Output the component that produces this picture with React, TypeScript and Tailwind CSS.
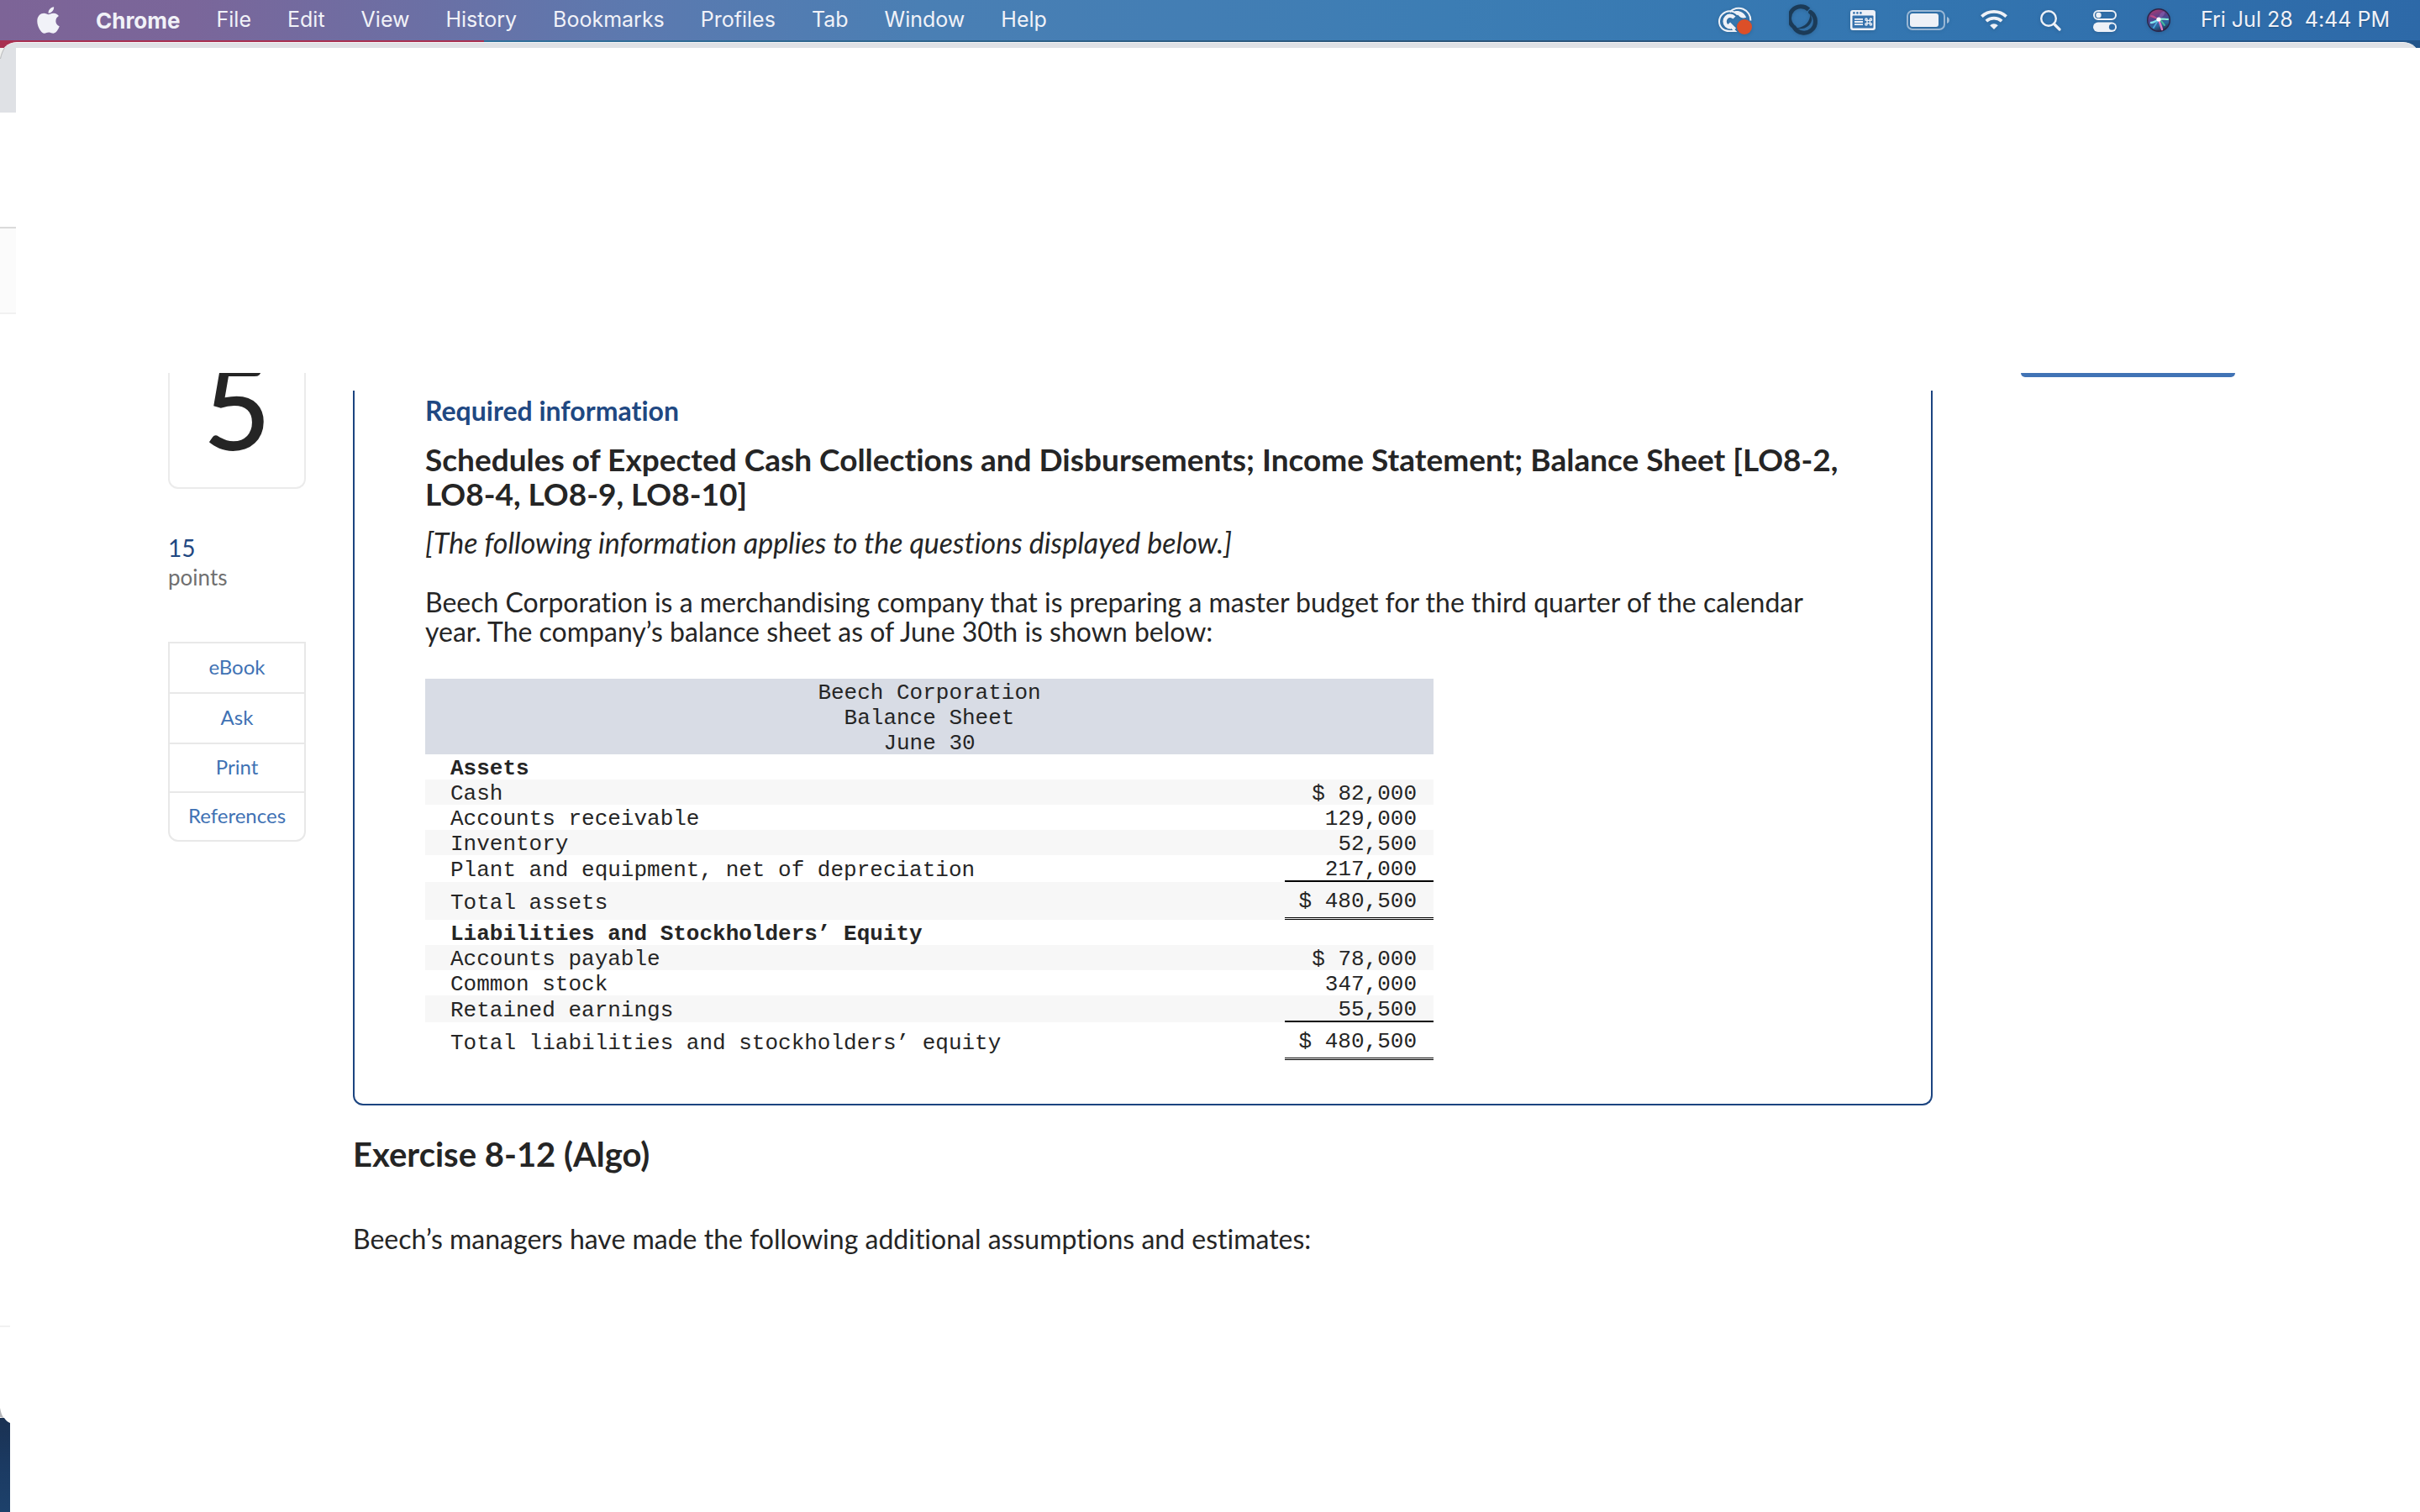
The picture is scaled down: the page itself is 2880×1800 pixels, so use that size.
import React from 'react'
import { FaApple } from 'react-icons/fa'

const menus = ['File', 'Edit', 'View', 'History', 'Bookmarks', 'Profiles', 'Tab', 'Window', 'Help']

const links = [
  { label: 'eBook', height: 'h-[60px]' },
  { label: 'Ask', height: 'h-[60px]' },
  { label: 'Print', height: 'h-[58px]' },
  { label: 'References', height: 'h-[56px]' },
]

type Row = { label: string; amount?: string; kind?: 'heading' | 'last' | 'total'; shaded?: boolean }

const rows: Row[] = [
  { label: 'Assets', kind: 'heading' },
  { label: 'Cash', amount: '$ 82,000', shaded: true },
  { label: 'Accounts receivable', amount: '129,000' },
  { label: 'Inventory', amount: '52,500', shaded: true },
  { label: 'Plant and equipment, net of depreciation', amount: '217,000', kind: 'last' },
  { label: 'Total assets', amount: '$ 480,500', kind: 'total', shaded: true },
  { label: 'Liabilities and Stockholders’ Equity', kind: 'heading' },
  { label: 'Accounts payable', amount: '$ 78,000', shaded: true },
  { label: 'Common stock', amount: '347,000' },
  { label: 'Retained earnings', amount: '55,500', kind: 'last', shaded: true },
  { label: 'Total liabilities and stockholders’ equity', amount: '$ 480,500', kind: 'total' },
]

function CreativeCloudIcon() {
  return (
    <svg width="48" height="48" viewBox="0 0 48 48" fill="none" stroke="#eef1f7" strokeLinecap="butt">
      <path d="M38.4 24.5A14.4 14.4 0 0 0 13.5 14.2" strokeWidth="2" />
      <path d="M13.5 13.2C8 13 1 18 1 25.6C1 32.5 6.5 37 13 37H20L12.5 29.5" strokeWidth="2" />
      <path d="M19.5 35L12.5 28" strokeWidth="4.4" />
      <path d="M15.2 32.5C10.5 32.2 7.6 29.4 7.6 25.6C7.6 21.4 10.8 18.8 14 18.8C16 18.8 17.7 19.7 19 21" strokeWidth="4.4" />
      <path d="M13.4 13.2C17.5 13.2 20.5 15 23 17.5" strokeWidth="2" />
      <path d="M17 14.6C20 12.2 29 11.5 33.2 20.8C29.6 22 26.5 21.5 24 18.6C22 16.4 20 15 17 14.6Z" fill="#eef1f7" stroke="none" />
      <circle cx="31" cy="32" r="9" fill="#dc4f28" stroke="none" />
    </svg>
  )
}

function SyncRingIcon() {
  return (
    <svg width="37" height="48" viewBox="0 0 37 48" fill="none" stroke="#1b3b58">
      <path d="M23.5 11.3A13.6 13.6 0 0 0 5 31.5" strokeWidth="5" />
      <path d="M25.6 14.4A13.6 13.6 0 1 1 6.2 32.6" strokeWidth="5" strokeLinecap="round" />
      <path d="M25.4 15.5C25.6 26 19 32.2 9.5 33.4C17 36.5 27 31 27.2 22.5Z" fill="#1b3b58" stroke="none" />
    </svg>
  )
}

function ShortcutWindowIcon() {
  return (
    <svg width="31" height="48" viewBox="0 0 31 48" fill="none">
      <rect x="0" y="12" width="30" height="24" rx="3" fill="#eef1f7" />
      <rect x="2.5" y="18.5" width="25" height="15" rx="1" fill="#3672ad" />
      <g fill="#3672ad">
        <circle cx="4.4" cy="15.4" r="1.3" />
        <circle cx="8.4" cy="15.4" r="1.3" />
        <circle cx="12.4" cy="15.4" r="1.3" />
      </g>
      <path d="M5 22.8H15M5 26H15M5 29.2H15" stroke="#eef1f7" strokeWidth="1.8" />
      <g stroke="#eef1f7" strokeWidth="1.3">
        <path d="M20 24.3H23.4V27.7H20Z" />
        <circle cx="19" cy="23.2" r="1.2" />
        <circle cx="24.4" cy="23.2" r="1.2" />
        <circle cx="19" cy="28.8" r="1.2" />
        <circle cx="24.4" cy="28.8" r="1.2" />
      </g>
    </svg>
  )
}

function BatteryIcon() {
  return (
    <svg width="52" height="48" viewBox="0 0 52 48" fill="none">
      <rect x="1" y="13" width="44" height="22" rx="6" stroke="#eef1f7" strokeOpacity=".55" strokeWidth="2" />
      <rect x="4" y="16" width="34" height="16" rx="3" fill="#eef1f7" />
      <path d="M48 20C51.8 21.2 51.8 26.8 48 28Z" fill="#eef1f7" fillOpacity=".6" />
    </svg>
  )
}

function WifiIcon() {
  return (
    <svg width="35" height="48" viewBox="0 0 35 48" fill="none" stroke="#eef1f7" strokeWidth="3.8">
      <path d="M1.4 19.6A21.5 21.5 0 0 1 30.6 19.6" />
      <path d="M6.8 25.2A13.6 13.6 0 0 1 25.2 25.2" />
      <path d="M16 35L11.2 30.2A7 7 0 0 1 20.8 30.2Z" fill="#eef1f7" stroke="none" />
    </svg>
  )
}

function SearchIcon() {
  return (
    <svg width="27" height="48" viewBox="0 0 27 48" fill="none" stroke="#eef1f7">
      <circle cx="10" cy="22" r="8.8" strokeWidth="2.4" />
      <path d="M16.5 28.5L23 35" strokeWidth="3.2" strokeLinecap="round" />
    </svg>
  )
}

function ControlCenterIcon() {
  return (
    <svg width="28" height="48" viewBox="0 0 28 48" fill="none">
      <rect x="1" y="13" width="26" height="10" rx="5" stroke="#eef1f7" strokeWidth="2" />
      <circle cx="6.5" cy="18" r="3.2" fill="#eef1f7" />
      <rect x="0" y="26.5" width="28" height="11.5" rx="5.75" fill="#eef1f7" />
      <circle cx="22.5" cy="32.2" r="3.6" fill="#2f6ca8" />
    </svg>
  )
}

function SiriIcon() {
  return (
    <svg width="28" height="48" viewBox="0 0 28 48" fill="none">
      <defs>
        <linearGradient id="siri" x1="8" y1="10" x2="18" y2="38" gradientUnits="userSpaceOnUse">
          <stop offset="0" stopColor="#b5386f" />
          <stop offset=".4" stopColor="#54408c" />
          <stop offset=".7" stopColor="#2a6aa0" />
          <stop offset="1" stopColor="#25223f" />
        </linearGradient>
      </defs>
      <circle cx="14" cy="24" r="13.3" fill="url(#siri)" stroke="#2c2547" strokeWidth="1.4" />
      <path d="M14 23C10 19 6 17 3 19C6 21 10 22 14 23Z" fill="#e0518a" fillOpacity=".7" />
      <path d="M14 23C14 17 18 13 21 14C22 17 18 21 14 23Z" fill="#7d5aa8" fillOpacity=".8" />
      <path d="M14 23C11 25 8 27 5 27" stroke="#7fe5ef" strokeWidth="2.4" strokeLinecap="round" />
      <path d="M14 23C18 22 21 23 25 23" stroke="#8cf0d8" strokeWidth="2.2" strokeLinecap="round" />
      <path d="M14 23C15 27 17 31 18 35" stroke="#e27bc4" strokeWidth="2.4" strokeLinecap="round" />
      <path d="M14 23C12 27 9 31 8 33" stroke="#4fa8dd" strokeWidth="1.8" strokeLinecap="round" />
      <path d="M14 23C18 25 20 28 21 30" stroke="#46bd9c" strokeWidth="1.8" strokeLinecap="round" />
      <circle cx="14" cy="23" r="2.6" fill="#fff" />
    </svg>
  )
}

const statusItems = [
  { name: 'Creative Cloud', icon: <CreativeCloudIcon /> },
  { name: 'Sync', icon: <SyncRingIcon /> },
  { name: 'Shortcuts', icon: <ShortcutWindowIcon /> },
  { name: 'Battery', icon: <BatteryIcon /> },
  { name: 'Wi-Fi', icon: <WifiIcon /> },
  { name: 'Spotlight', icon: <SearchIcon /> },
  { name: 'Control Center', icon: <ControlCenterIcon /> },
  { name: 'Siri', icon: <SiriIcon /> },
]

function MenuBar() {
  return (
    <header className="flex h-12 items-center justify-between bg-linear-[to_right,#7d6497_0%,#7a669a_8%,#6c6fa4_17%,#5c79af_26%,#4a7fb4_38%,#3c7db4_60%,#3375b0_80%,#2d69a8_100%] pr-9 pl-11 font-['Inter',sans-serif] text-[25px] text-[#f1f2f8] text-shadow-sm">
      <nav className="flex items-center gap-[43px]">
        <button aria-label="Apple">
          <FaApple className="h-9 w-[27px]" />
        </button>
        <button className="text-[26px] font-bold">Chrome</button>
        {menus.map(menu => (
          <button key={menu}>{menu}</button>
        ))}
      </nav>
      <div className="flex items-center gap-9">
        {statusItems.map(item => (
          <button key={item.name} aria-label={item.name} className="drop-shadow-sm">
            {item.icon}
          </button>
        ))}
        <time className="whitespace-pre">Fri Jul 28  4:44 PM</time>
      </div>
    </header>
  )
}

// sliver of the browser window that shows along the left side
function WindowEdge() {
  return (
    <div className="flex w-[19px] flex-col">
      <svg width="19" height="77" viewBox="0 0 19 77">
        <rect width="19" height="77" fill="#f1f1ef" />
        <path d="M0 14C1 8 2.5 4 5.5 0H19V77H0Z" fill="#dfe1e5" />
        <path d="M.5 13C1.5 8 3 4 5.5 0" fill="none" stroke="#b9babb" />
      </svg>
      <div className="mt-[136px] h-[104px] border-t-2 border-b-2 border-t-[#dadada] border-b-[#f1f1f1] bg-[#fbfbfb]" />
      <div className="mt-auto h-0.5 w-3 bg-[#f1f1f1]" />
      <svg width="12" height="128" viewBox="0 0 12 128" className="mt-[92px]">
        <defs>
          <linearGradient id="desk" x1="0" y1="0" x2="0" y2="1">
            <stop offset="0" stopColor="#1a3152" />
            <stop offset=".5" stopColor="#1b3a62" />
            <stop offset="1" stopColor="#1d416b" />
          </linearGradient>
        </defs>
        <path d="M0 16L5 16C7 19 9 21 12 22V128H0Z" fill="url(#desk)" />
        <path d="M0 4C1 9 2 13 4.5 16L0 15Z" fill="#b4b5b9" />
      </svg>
    </div>
  )
}

function Sidebar() {
  return (
    <aside className="mt-[387px] ml-[181px] w-[164px] shrink-0">
      <div className="flex h-[138px] items-end justify-center overflow-hidden rounded-b-xl border-2 border-t-0 border-[#ebebeb] pb-7 text-[140px] leading-[140px] font-medium">
        5
      </div>
      <p className="mt-[55px] text-[28px] leading-[30px] text-[#1f4882]">15</p>
      <p className="text-[26px] leading-10 text-[#707070]">points</p>
      <ul className="mt-[57px] divide-y-2 divide-[#e8e8e8] rounded-b-xl border-2 border-[#e8e8e8] text-2xl text-[#3f72b4]">
        {links.map(link => (
          <li key={link.label} className={link.height}>
            <a href="#" className="flex h-full items-center justify-center pb-0.5">
              {link.label}
            </a>
          </li>
        ))}
      </ul>
    </aside>
  )
}

function BalanceSheet() {
  return (
    <table className="mt-[39px] w-full max-w-[1200px] border-separate border-spacing-0 font-['Liberation_Mono',monospace] text-[26px] leading-[26px]">
      <thead className="bg-[#d8dce5]">
        {['Beech Corporation', 'Balance Sheet', 'June 30'].map(title => (
          <tr key={title}>
            <th colSpan={2} className="pt-1 font-normal">{title}</th>
          </tr>
        ))}
      </thead>
      <tbody>
        {rows.map(row => (
          <tr key={row.label} className={row.shaded ? 'bg-[#f7f7f7]' : ''}>
            <th
              scope="row"
              className={`pt-1 pl-[30px] text-left ${row.kind === 'heading' ? 'font-bold' : 'font-normal'}`}
            >
              {row.label}
            </th>
            <td
              className={`w-[177px] pt-1 pr-5 text-right whitespace-nowrap ${
                row.kind === 'last' ? 'border-b-2 border-black' : ''
              } ${row.kind === 'total' ? 'h-[45px] border-b-3 border-double border-black' : ''}`}
            >
              {row.amount}
            </td>
          </tr>
        ))}
      </tbody>
    </table>
  )
}

export default function App() {
  return (
    <div className="flex min-h-screen flex-col bg-white font-['Lato',sans-serif] text-[#252525] [font-variant-ligatures:none]">
      <MenuBar />
      <div className="h-[9px] overflow-hidden bg-linear-[to_right,#a82f50_0%,#a82f50_20%,#2f6f9a_20%,#2b5478_60%,#22558a_100%] pt-0.5">
        <div className="h-10 rounded-t-[20px] border-t border-[#f3f3f5] bg-[#dfe1e5]" />
      </div>
      <div className="flex flex-1">
        <WindowEdge />
        <Sidebar />
        <main className="mt-[408px] ml-14 flex-1">
          <section className="rounded-b-xl border-2 border-t-0 border-[#1c4480] px-[84px] pt-1.5 pb-[52px] text-[32px] leading-[35px]">
            <h2 className="font-bold text-[#1f4882]">Required information</h2>
            <h1 className="mt-5 text-[37px] leading-[41px] font-bold">
              Schedules of Expected Cash Collections and Disbursements; Income Statement; Balance Sheet [LO8-2, LO8-4,
              LO8-9, LO8-10]
            </h1>
            <p className="mt-5 text-[34px] italic">
              [The following information applies to the questions displayed below.]
            </p>
            <p className="mt-9">
              Beech Corporation is a merchandising company that is preparing a master budget for the third quarter of
              the calendar year. The company’s balance sheet as of June 30th is shown below:
            </p>
            <BalanceSheet />
          </section>
          <h2 className="mt-[34px] text-[40px] leading-[48px] font-bold">Exercise 8-12 (Algo)</h2>
          <p className="mt-[59px] text-[32px] leading-[35px]">
            Beech’s managers have made the following additional assumptions and estimates:
          </p>
        </main>
        <div className="mt-[387px] mr-[220px] ml-[105px] h-[5px] w-[255px] rounded-b-[5px] bg-[#4173b5]" />
      </div>
    </div>
  )
}
